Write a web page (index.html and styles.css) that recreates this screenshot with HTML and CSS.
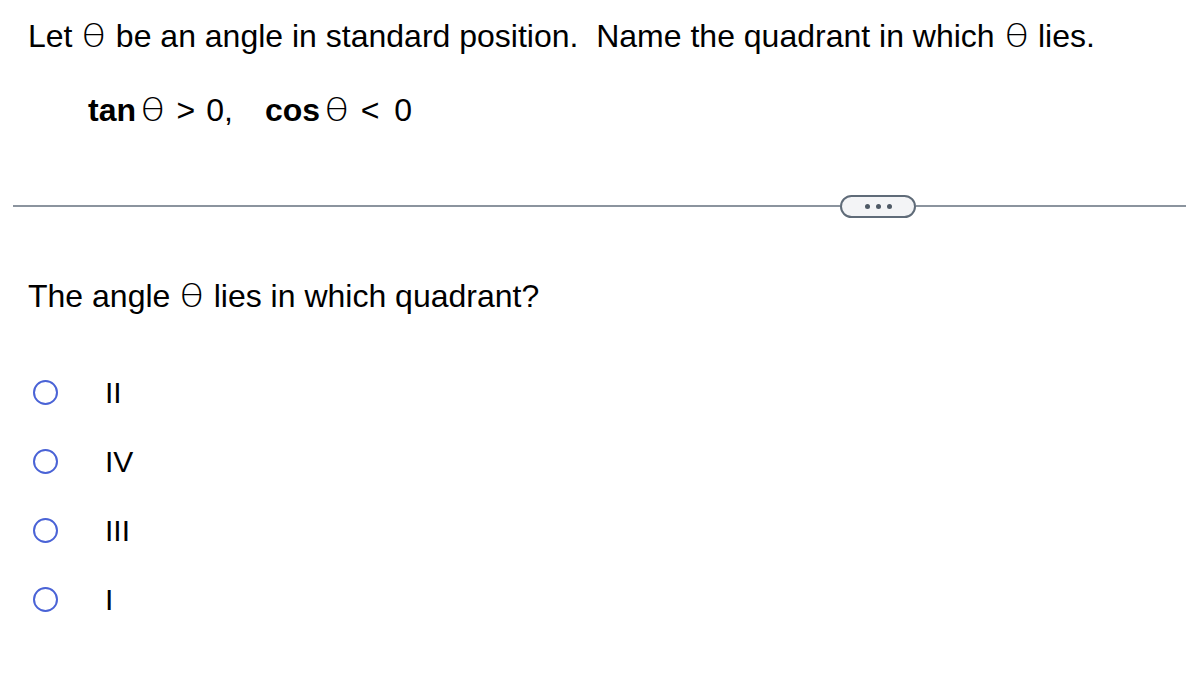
FILE: index.html
```html
<!DOCTYPE html>
<html>
<head>
<meta charset="utf-8">
<link rel="stylesheet" href="styles.css">
</head>
<body>
<div class="page">
  <p class="prompt">Let <span class="th">θ</span> be an angle in standard position.&nbsp; Name the quadrant in which <span class="th">θ</span> lies.</p>
  <p class="cond"><b>tan</b><span class="th">θ</span><span class="op gt">&gt;</span><span class="num">0,</span><b class="cos">cos</b><span class="th">θ</span><span class="op lt">&lt;</span><span class="num">0</span></p>
  <div class="divider">
    <span class="line"></span>
    <span class="pill"><i></i><i></i><i></i></span>
    <span class="line"></span>
  </div>
  <p class="question">The angle <span class="th">θ</span> lies in which quadrant?</p>
  <ul class="options">
    <li><span class="radio"></span><span class="lbl">II</span></li>
    <li><span class="radio"></span><span class="lbl">IV</span></li>
    <li><span class="radio"></span><span class="lbl">III</span></li>
    <li><span class="radio"></span><span class="lbl">I</span></li>
  </ul>
</div>
</body>
</html>
```
FILE: styles.css
```css
html, body { margin: 0; padding: 0; background: #fff; }
body { font-family: "Liberation Sans", Arial, sans-serif; color: #000; }
.page { padding: 0 0 0 13px; }
p { margin: 0; }
.th { font-family: "DejaVu Sans", sans-serif; font-weight: 200; display: inline-block; transform: scaleX(1.3); margin: 0 3px; }
.prompt { font-size: 32px; line-height: 36px; padding: 18px 0 0 15px; }
.cond { font-size: 32px; line-height: 36px; padding: 38px 0 0 75px; }
.cond b { font-weight: bold; }
.cond .th { margin: 0 14px 0 7px; }
.cond .gt { margin-right: 11px; }
.cond .lt { margin-right: 15px; }
.cond .cos { margin-left: 32px; }
.divider { display: flex; align-items: center; margin-top: 66px; height: 24px; }
.line { height: 2px; background: #8b949e; flex: 1; }
.line:last-child { flex: 0 0 270px; }
.pill { width: 72px; height: 19px; border: 2px solid #5f6b78; border-radius: 12px; background: #f3f4f6; display: flex; align-items: center; justify-content: center; gap: 6px; }
.pill i { width: 5px; height: 5px; border-radius: 50%; background: #4e5965; }
.question { font-size: 32px; line-height: 36px; padding: 60px 0 0 15px; }
.options { list-style: none; margin: 0; padding: 66px 0 0 20px; }
.options li { display: flex; align-items: center; height: 25px; margin-bottom: 44px; font-size: 30px; }
.radio { width: 21px; height: 21px; border: 2px solid #4a63d6; border-radius: 50%; box-sizing: content-box; }
.lbl { margin-left: 47px; }
```
